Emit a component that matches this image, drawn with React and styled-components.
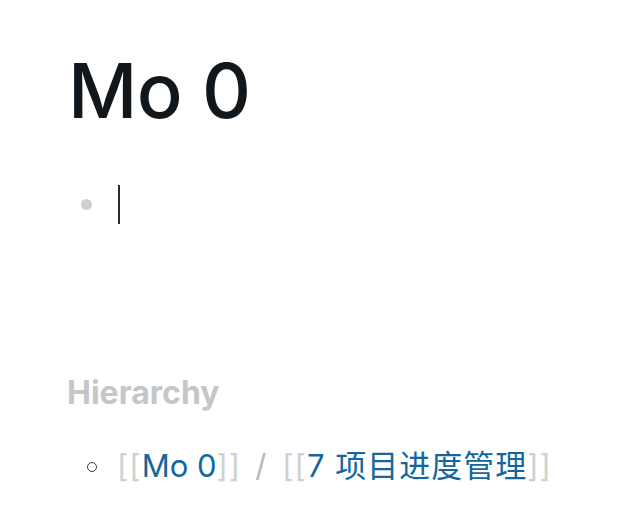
import React from 'react'
import styled, { createGlobalStyle } from 'styled-components'

const GlobalStyle = createGlobalStyle`
  html, body {
    margin: 0;
    padding: 0;
    background: #ffffff;
  }

  body {
    font-family: Inter, 'Noto Sans CJK SC', sans-serif;
    -webkit-font-smoothing: antialiased;
  }
`

const Page = styled.div`
  display: flex;
  flex-direction: column;
  padding: 45px 0 0 68px;
`

const Title = styled.h1`
  margin: 0;
  font-size: 76px;
  font-weight: 500;
  line-height: 1.2;
  color: #12171c;
  letter-spacing: -0.5px;
`

const Block = styled.div`
  display: flex;
  align-items: center;
  height: 39px;
  margin-top: 49px;
`

const BulletWrap = styled.div`
  width: 36px;
  display: flex;
  justify-content: center;
  align-items: center;
`

const Dot = styled.span`
  width: 11px;
  height: 11px;
  border-radius: 50%;
  background: #cfcfcf;
`

const Editor = styled.div`
  margin-left: 14px;
  height: 39px;
  display: flex;
  align-items: center;
`

const Caret = styled.span`
  width: 2px;
  height: 39px;
  background: #2b2b2b;
`

const Heading = styled.h2`
  margin: 150px 0 0 -1px;
  font-size: 32px;
  font-weight: 700;
  line-height: 1.2;
  color: #c6c6c6;
`

const List = styled.ul`
  list-style: none;
  margin: 33px 0 0;
  padding: 0;
`

const Item = styled.li`
  display: flex;
  align-items: center;
  padding-left: 19px;
  font-size: 31px;
  line-height: 1.3;
`

const Circle = styled.span`
  box-sizing: border-box;
  width: 10px;
  height: 10px;
  border-radius: 50%;
  border: 1.5px solid #3a3a3a;
  margin-right: 20px;
  margin-top: 2px;
`

const Bracket = styled.span`
  color: #d0d0d0;
  letter-spacing: 1px;
`

const PageLink = styled.span`
  color: #14669f;
  letter-spacing: ${(props) => props.spacing || 0}px;
`

const Sep = styled.span`
  color: #b8b8b8;
  margin: 0 16px 0 14px;
`

const Ref = ({ name, spacing }) => (
  <span>
    <Bracket>[[</Bracket>
    <PageLink spacing={spacing}>{name}</PageLink>
    <Bracket>]]</Bracket>
  </span>
)

const App = () => {
  return (
    <>
      <GlobalStyle />
      <Page>
        <Title>Mo 0</Title>
        <Block>
          <BulletWrap>
            <Dot />
          </BulletWrap>
          <Editor>
            <Caret />
          </Editor>
        </Block>
        <Heading>Hierarchy</Heading>
        <List>
          <Item>
            <Circle />
            <Ref name="Mo 0" />
            <Sep>/</Sep>
            <Ref name="7 项目进度管理" spacing={1} />
          </Item>
        </List>
      </Page>
    </>
  )
}

export default App
